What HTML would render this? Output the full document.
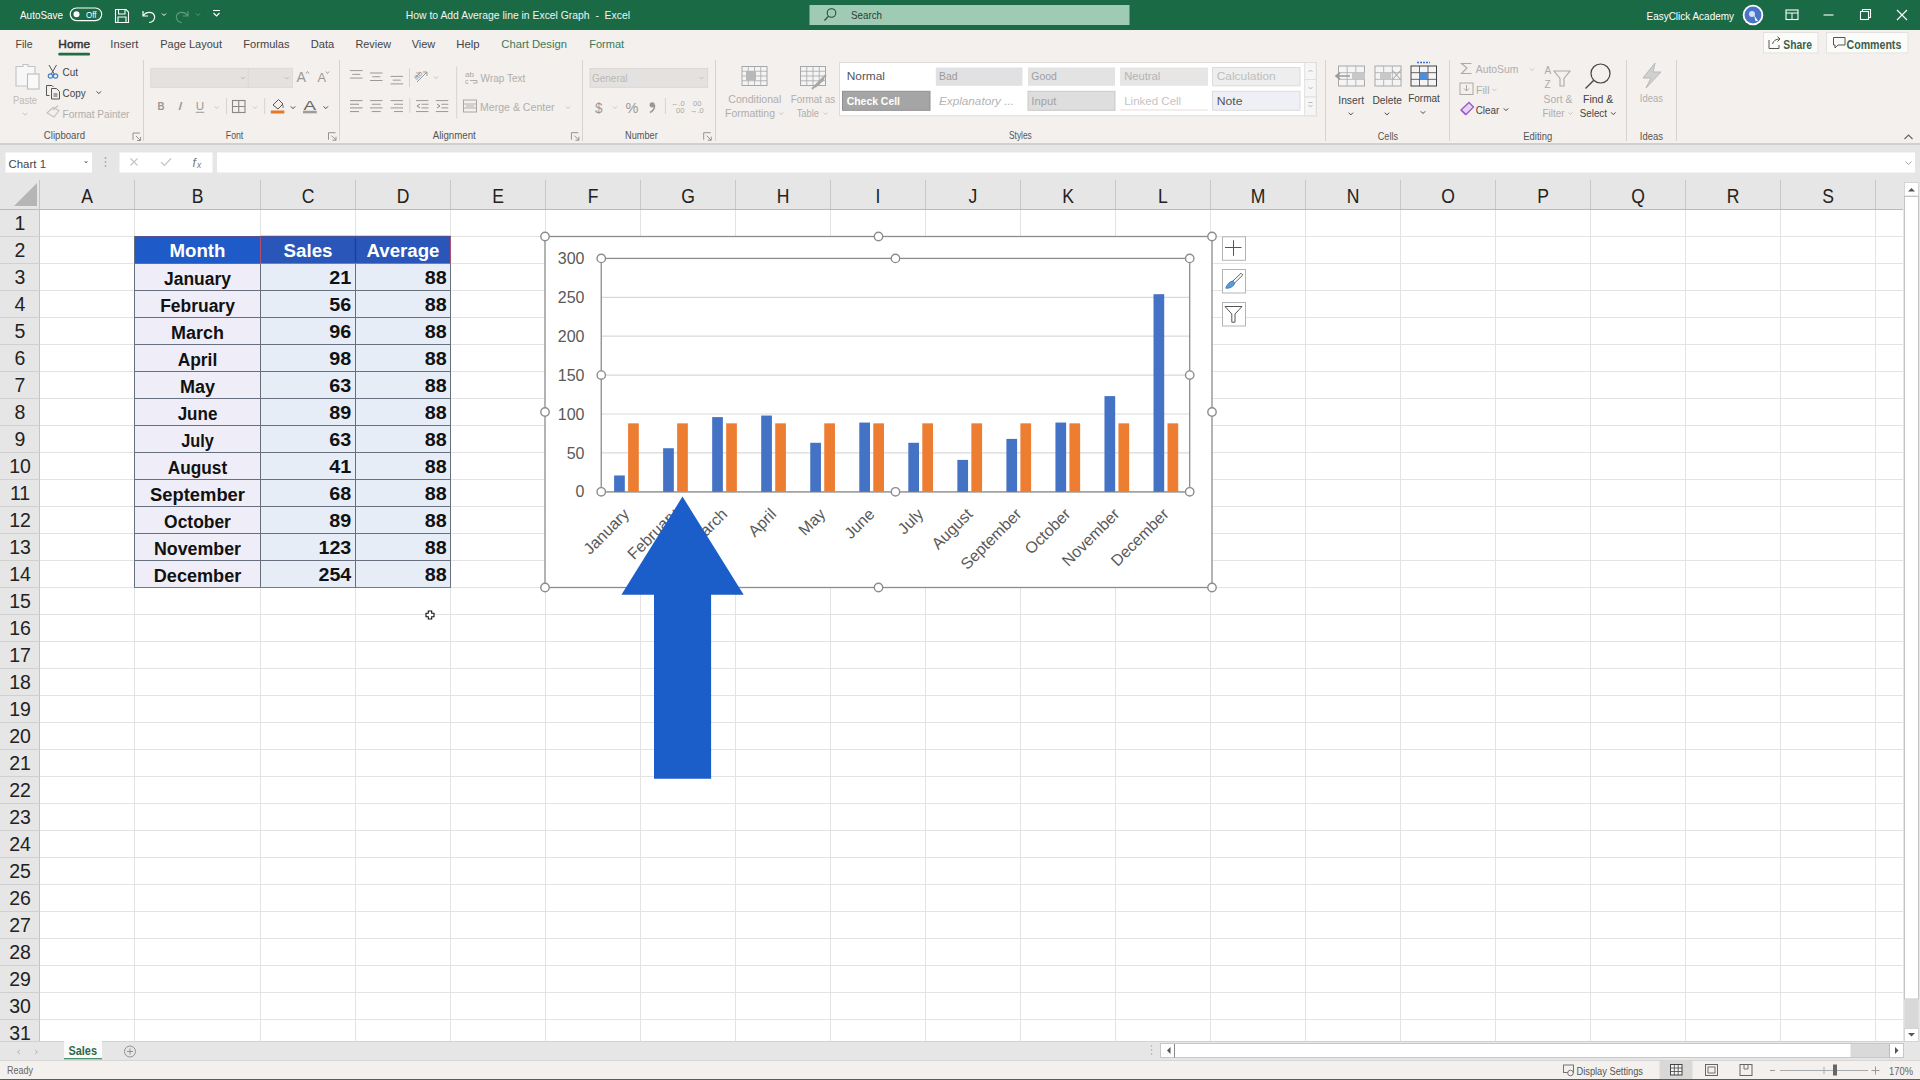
<!DOCTYPE html><html><head><meta charset="utf-8"><style>html,body{margin:0;padding:0;width:1920px;height:1080px;overflow:hidden;background:#fff}svg{display:block}text{font-family:"Liberation Sans",sans-serif}</style></head><body><svg width="1920" height="1080" viewBox="0 0 1920 1080"><rect x="0" y="0" width="1920" height="30" fill="#1b6a46" />
<rect x="0" y="30" width="1920" height="113" fill="#f4f0ed" />
<rect x="0" y="143" width="1920" height="2" fill="#d2d0ce" />
<rect x="0" y="145" width="1920" height="31" fill="#e6e6e6" />
<rect x="0" y="176" width="1903" height="33.5" fill="#e6e6e6" />
<rect x="39.5" y="209.5" width="1863.5" height="831.5" fill="#ffffff" />
<rect x="0" y="209.5" width="39.5" height="831.5" fill="#e6e6e6" />
<rect x="0" y="1041" width="1920" height="20" fill="#e6e6e6" />
<rect x="0" y="1061" width="1920" height="18" fill="#f4f0ed" />
<rect x="0" y="1079" width="1920" height="1" fill="#5b5b5b" />
<rect x="1903" y="176" width="17" height="865" fill="#e6e6e6" />
<line x1="39.5" y1="236.5" x2="1903" y2="236.5" stroke="#e3e3e3" stroke-width="1" />
<line x1="39.5" y1="263.5" x2="1903" y2="263.5" stroke="#e3e3e3" stroke-width="1" />
<line x1="39.5" y1="290.5" x2="1903" y2="290.5" stroke="#e3e3e3" stroke-width="1" />
<line x1="39.5" y1="317.5" x2="1903" y2="317.5" stroke="#e3e3e3" stroke-width="1" />
<line x1="39.5" y1="344.5" x2="1903" y2="344.5" stroke="#e3e3e3" stroke-width="1" />
<line x1="39.5" y1="371.5" x2="1903" y2="371.5" stroke="#e3e3e3" stroke-width="1" />
<line x1="39.5" y1="398.5" x2="1903" y2="398.5" stroke="#e3e3e3" stroke-width="1" />
<line x1="39.5" y1="425.5" x2="1903" y2="425.5" stroke="#e3e3e3" stroke-width="1" />
<line x1="39.5" y1="452.5" x2="1903" y2="452.5" stroke="#e3e3e3" stroke-width="1" />
<line x1="39.5" y1="479.5" x2="1903" y2="479.5" stroke="#e3e3e3" stroke-width="1" />
<line x1="39.5" y1="506.5" x2="1903" y2="506.5" stroke="#e3e3e3" stroke-width="1" />
<line x1="39.5" y1="533.5" x2="1903" y2="533.5" stroke="#e3e3e3" stroke-width="1" />
<line x1="39.5" y1="560.5" x2="1903" y2="560.5" stroke="#e3e3e3" stroke-width="1" />
<line x1="39.5" y1="587.5" x2="1903" y2="587.5" stroke="#e3e3e3" stroke-width="1" />
<line x1="39.5" y1="614.5" x2="1903" y2="614.5" stroke="#e3e3e3" stroke-width="1" />
<line x1="39.5" y1="641.5" x2="1903" y2="641.5" stroke="#e3e3e3" stroke-width="1" />
<line x1="39.5" y1="668.5" x2="1903" y2="668.5" stroke="#e3e3e3" stroke-width="1" />
<line x1="39.5" y1="695.5" x2="1903" y2="695.5" stroke="#e3e3e3" stroke-width="1" />
<line x1="39.5" y1="722.5" x2="1903" y2="722.5" stroke="#e3e3e3" stroke-width="1" />
<line x1="39.5" y1="749.5" x2="1903" y2="749.5" stroke="#e3e3e3" stroke-width="1" />
<line x1="39.5" y1="776.5" x2="1903" y2="776.5" stroke="#e3e3e3" stroke-width="1" />
<line x1="39.5" y1="803.5" x2="1903" y2="803.5" stroke="#e3e3e3" stroke-width="1" />
<line x1="39.5" y1="830.5" x2="1903" y2="830.5" stroke="#e3e3e3" stroke-width="1" />
<line x1="39.5" y1="857.5" x2="1903" y2="857.5" stroke="#e3e3e3" stroke-width="1" />
<line x1="39.5" y1="884.5" x2="1903" y2="884.5" stroke="#e3e3e3" stroke-width="1" />
<line x1="39.5" y1="911.5" x2="1903" y2="911.5" stroke="#e3e3e3" stroke-width="1" />
<line x1="39.5" y1="938.5" x2="1903" y2="938.5" stroke="#e3e3e3" stroke-width="1" />
<line x1="39.5" y1="965.5" x2="1903" y2="965.5" stroke="#e3e3e3" stroke-width="1" />
<line x1="39.5" y1="992.5" x2="1903" y2="992.5" stroke="#e3e3e3" stroke-width="1" />
<line x1="39.5" y1="1019.5" x2="1903" y2="1019.5" stroke="#e3e3e3" stroke-width="1" />
<line x1="134.5" y1="209.5" x2="134.5" y2="1041" stroke="#e3e3e3" stroke-width="1" />
<line x1="260.5" y1="209.5" x2="260.5" y2="1041" stroke="#e3e3e3" stroke-width="1" />
<line x1="355.5" y1="209.5" x2="355.5" y2="1041" stroke="#e3e3e3" stroke-width="1" />
<line x1="450.5" y1="209.5" x2="450.5" y2="1041" stroke="#e3e3e3" stroke-width="1" />
<line x1="545.5" y1="209.5" x2="545.5" y2="1041" stroke="#e3e3e3" stroke-width="1" />
<line x1="640.5" y1="209.5" x2="640.5" y2="1041" stroke="#e3e3e3" stroke-width="1" />
<line x1="735.5" y1="209.5" x2="735.5" y2="1041" stroke="#e3e3e3" stroke-width="1" />
<line x1="830.5" y1="209.5" x2="830.5" y2="1041" stroke="#e3e3e3" stroke-width="1" />
<line x1="925.5" y1="209.5" x2="925.5" y2="1041" stroke="#e3e3e3" stroke-width="1" />
<line x1="1020.5" y1="209.5" x2="1020.5" y2="1041" stroke="#e3e3e3" stroke-width="1" />
<line x1="1115.5" y1="209.5" x2="1115.5" y2="1041" stroke="#e3e3e3" stroke-width="1" />
<line x1="1210.5" y1="209.5" x2="1210.5" y2="1041" stroke="#e3e3e3" stroke-width="1" />
<line x1="1305.5" y1="209.5" x2="1305.5" y2="1041" stroke="#e3e3e3" stroke-width="1" />
<line x1="1400.5" y1="209.5" x2="1400.5" y2="1041" stroke="#e3e3e3" stroke-width="1" />
<line x1="1495.5" y1="209.5" x2="1495.5" y2="1041" stroke="#e3e3e3" stroke-width="1" />
<line x1="1590.5" y1="209.5" x2="1590.5" y2="1041" stroke="#e3e3e3" stroke-width="1" />
<line x1="1685.5" y1="209.5" x2="1685.5" y2="1041" stroke="#e3e3e3" stroke-width="1" />
<line x1="1780.5" y1="209.5" x2="1780.5" y2="1041" stroke="#e3e3e3" stroke-width="1" />
<line x1="1875.5" y1="209.5" x2="1875.5" y2="1041" stroke="#e3e3e3" stroke-width="1" />
<line x1="134.5" y1="180" x2="134.5" y2="209.5" stroke="#c8c8c8" stroke-width="1" />
<line x1="260.5" y1="180" x2="260.5" y2="209.5" stroke="#c8c8c8" stroke-width="1" />
<line x1="355.5" y1="180" x2="355.5" y2="209.5" stroke="#c8c8c8" stroke-width="1" />
<line x1="450.5" y1="180" x2="450.5" y2="209.5" stroke="#c8c8c8" stroke-width="1" />
<line x1="545.5" y1="180" x2="545.5" y2="209.5" stroke="#c8c8c8" stroke-width="1" />
<line x1="640.5" y1="180" x2="640.5" y2="209.5" stroke="#c8c8c8" stroke-width="1" />
<line x1="735.5" y1="180" x2="735.5" y2="209.5" stroke="#c8c8c8" stroke-width="1" />
<line x1="830.5" y1="180" x2="830.5" y2="209.5" stroke="#c8c8c8" stroke-width="1" />
<line x1="925.5" y1="180" x2="925.5" y2="209.5" stroke="#c8c8c8" stroke-width="1" />
<line x1="1020.5" y1="180" x2="1020.5" y2="209.5" stroke="#c8c8c8" stroke-width="1" />
<line x1="1115.5" y1="180" x2="1115.5" y2="209.5" stroke="#c8c8c8" stroke-width="1" />
<line x1="1210.5" y1="180" x2="1210.5" y2="209.5" stroke="#c8c8c8" stroke-width="1" />
<line x1="1305.5" y1="180" x2="1305.5" y2="209.5" stroke="#c8c8c8" stroke-width="1" />
<line x1="1400.5" y1="180" x2="1400.5" y2="209.5" stroke="#c8c8c8" stroke-width="1" />
<line x1="1495.5" y1="180" x2="1495.5" y2="209.5" stroke="#c8c8c8" stroke-width="1" />
<line x1="1590.5" y1="180" x2="1590.5" y2="209.5" stroke="#c8c8c8" stroke-width="1" />
<line x1="1685.5" y1="180" x2="1685.5" y2="209.5" stroke="#c8c8c8" stroke-width="1" />
<line x1="1780.5" y1="180" x2="1780.5" y2="209.5" stroke="#c8c8c8" stroke-width="1" />
<line x1="1875.5" y1="180" x2="1875.5" y2="209.5" stroke="#c8c8c8" stroke-width="1" />
<line x1="0" y1="209.5" x2="1903" y2="209.5" stroke="#b9b9b9" stroke-width="1" />
<line x1="39.5" y1="180" x2="39.5" y2="1041" stroke="#c4c4c4" stroke-width="1" />
<line x1="0" y1="236.5" x2="39.5" y2="236.5" stroke="#d0d0d0" stroke-width="1" />
<line x1="0" y1="263.5" x2="39.5" y2="263.5" stroke="#d0d0d0" stroke-width="1" />
<line x1="0" y1="290.5" x2="39.5" y2="290.5" stroke="#d0d0d0" stroke-width="1" />
<line x1="0" y1="317.5" x2="39.5" y2="317.5" stroke="#d0d0d0" stroke-width="1" />
<line x1="0" y1="344.5" x2="39.5" y2="344.5" stroke="#d0d0d0" stroke-width="1" />
<line x1="0" y1="371.5" x2="39.5" y2="371.5" stroke="#d0d0d0" stroke-width="1" />
<line x1="0" y1="398.5" x2="39.5" y2="398.5" stroke="#d0d0d0" stroke-width="1" />
<line x1="0" y1="425.5" x2="39.5" y2="425.5" stroke="#d0d0d0" stroke-width="1" />
<line x1="0" y1="452.5" x2="39.5" y2="452.5" stroke="#d0d0d0" stroke-width="1" />
<line x1="0" y1="479.5" x2="39.5" y2="479.5" stroke="#d0d0d0" stroke-width="1" />
<line x1="0" y1="506.5" x2="39.5" y2="506.5" stroke="#d0d0d0" stroke-width="1" />
<line x1="0" y1="533.5" x2="39.5" y2="533.5" stroke="#d0d0d0" stroke-width="1" />
<line x1="0" y1="560.5" x2="39.5" y2="560.5" stroke="#d0d0d0" stroke-width="1" />
<line x1="0" y1="587.5" x2="39.5" y2="587.5" stroke="#d0d0d0" stroke-width="1" />
<line x1="0" y1="614.5" x2="39.5" y2="614.5" stroke="#d0d0d0" stroke-width="1" />
<line x1="0" y1="641.5" x2="39.5" y2="641.5" stroke="#d0d0d0" stroke-width="1" />
<line x1="0" y1="668.5" x2="39.5" y2="668.5" stroke="#d0d0d0" stroke-width="1" />
<line x1="0" y1="695.5" x2="39.5" y2="695.5" stroke="#d0d0d0" stroke-width="1" />
<line x1="0" y1="722.5" x2="39.5" y2="722.5" stroke="#d0d0d0" stroke-width="1" />
<line x1="0" y1="749.5" x2="39.5" y2="749.5" stroke="#d0d0d0" stroke-width="1" />
<line x1="0" y1="776.5" x2="39.5" y2="776.5" stroke="#d0d0d0" stroke-width="1" />
<line x1="0" y1="803.5" x2="39.5" y2="803.5" stroke="#d0d0d0" stroke-width="1" />
<line x1="0" y1="830.5" x2="39.5" y2="830.5" stroke="#d0d0d0" stroke-width="1" />
<line x1="0" y1="857.5" x2="39.5" y2="857.5" stroke="#d0d0d0" stroke-width="1" />
<line x1="0" y1="884.5" x2="39.5" y2="884.5" stroke="#d0d0d0" stroke-width="1" />
<line x1="0" y1="911.5" x2="39.5" y2="911.5" stroke="#d0d0d0" stroke-width="1" />
<line x1="0" y1="938.5" x2="39.5" y2="938.5" stroke="#d0d0d0" stroke-width="1" />
<line x1="0" y1="965.5" x2="39.5" y2="965.5" stroke="#d0d0d0" stroke-width="1" />
<line x1="0" y1="992.5" x2="39.5" y2="992.5" stroke="#d0d0d0" stroke-width="1" />
<line x1="0" y1="1019.5" x2="39.5" y2="1019.5" stroke="#d0d0d0" stroke-width="1" />
<text x="87.0" y="202.5" font-size="19.5" fill="#222" text-anchor="middle" font-weight="normal" font-style="normal" textLength="11.71" lengthAdjust="spacingAndGlyphs" >A</text>
<text x="197.5" y="202.5" font-size="19.5" fill="#222" text-anchor="middle" font-weight="normal" font-style="normal" textLength="11.71" lengthAdjust="spacingAndGlyphs" >B</text>
<text x="308.0" y="202.5" font-size="19.5" fill="#222" text-anchor="middle" font-weight="normal" font-style="normal" textLength="12.67" lengthAdjust="spacingAndGlyphs" >C</text>
<text x="403.0" y="202.5" font-size="19.5" fill="#222" text-anchor="middle" font-weight="normal" font-style="normal" textLength="12.67" lengthAdjust="spacingAndGlyphs" >D</text>
<text x="498.0" y="202.5" font-size="19.5" fill="#222" text-anchor="middle" font-weight="normal" font-style="normal" textLength="11.71" lengthAdjust="spacingAndGlyphs" >E</text>
<text x="593.0" y="202.5" font-size="19.5" fill="#222" text-anchor="middle" font-weight="normal" font-style="normal" textLength="10.72" lengthAdjust="spacingAndGlyphs" >F</text>
<text x="688.0" y="202.5" font-size="19.5" fill="#222" text-anchor="middle" font-weight="normal" font-style="normal" textLength="13.65" lengthAdjust="spacingAndGlyphs" >G</text>
<text x="783.0" y="202.5" font-size="19.5" fill="#222" text-anchor="middle" font-weight="normal" font-style="normal" textLength="12.67" lengthAdjust="spacingAndGlyphs" >H</text>
<text x="878.0" y="202.5" font-size="19.5" fill="#222" text-anchor="middle" font-weight="normal" font-style="normal" textLength="4.88" lengthAdjust="spacingAndGlyphs" >I</text>
<text x="973.0" y="202.5" font-size="19.5" fill="#222" text-anchor="middle" font-weight="normal" font-style="normal" textLength="8.78" lengthAdjust="spacingAndGlyphs" >J</text>
<text x="1068.0" y="202.5" font-size="19.5" fill="#222" text-anchor="middle" font-weight="normal" font-style="normal" textLength="11.71" lengthAdjust="spacingAndGlyphs" >K</text>
<text x="1163.0" y="202.5" font-size="19.5" fill="#222" text-anchor="middle" font-weight="normal" font-style="normal" textLength="9.76" lengthAdjust="spacingAndGlyphs" >L</text>
<text x="1258.0" y="202.5" font-size="19.5" fill="#222" text-anchor="middle" font-weight="normal" font-style="normal" textLength="14.62" lengthAdjust="spacingAndGlyphs" >M</text>
<text x="1353.0" y="202.5" font-size="19.5" fill="#222" text-anchor="middle" font-weight="normal" font-style="normal" textLength="12.67" lengthAdjust="spacingAndGlyphs" >N</text>
<text x="1448.0" y="202.5" font-size="19.5" fill="#222" text-anchor="middle" font-weight="normal" font-style="normal" textLength="13.65" lengthAdjust="spacingAndGlyphs" >O</text>
<text x="1543.0" y="202.5" font-size="19.5" fill="#222" text-anchor="middle" font-weight="normal" font-style="normal" textLength="11.71" lengthAdjust="spacingAndGlyphs" >P</text>
<text x="1638.0" y="202.5" font-size="19.5" fill="#222" text-anchor="middle" font-weight="normal" font-style="normal" textLength="13.65" lengthAdjust="spacingAndGlyphs" >Q</text>
<text x="1733.0" y="202.5" font-size="19.5" fill="#222" text-anchor="middle" font-weight="normal" font-style="normal" textLength="12.67" lengthAdjust="spacingAndGlyphs" >R</text>
<text x="1828.0" y="202.5" font-size="19.5" fill="#222" text-anchor="middle" font-weight="normal" font-style="normal" textLength="11.71" lengthAdjust="spacingAndGlyphs" >S</text>
<text x="20" y="229.8" font-size="19.5" fill="#222" text-anchor="middle" font-weight="normal" font-style="normal" >1</text>
<text x="20" y="256.8" font-size="19.5" fill="#222" text-anchor="middle" font-weight="normal" font-style="normal" >2</text>
<text x="20" y="283.8" font-size="19.5" fill="#222" text-anchor="middle" font-weight="normal" font-style="normal" >3</text>
<text x="20" y="310.8" font-size="19.5" fill="#222" text-anchor="middle" font-weight="normal" font-style="normal" >4</text>
<text x="20" y="337.8" font-size="19.5" fill="#222" text-anchor="middle" font-weight="normal" font-style="normal" >5</text>
<text x="20" y="364.8" font-size="19.5" fill="#222" text-anchor="middle" font-weight="normal" font-style="normal" >6</text>
<text x="20" y="391.8" font-size="19.5" fill="#222" text-anchor="middle" font-weight="normal" font-style="normal" >7</text>
<text x="20" y="418.8" font-size="19.5" fill="#222" text-anchor="middle" font-weight="normal" font-style="normal" >8</text>
<text x="20" y="445.8" font-size="19.5" fill="#222" text-anchor="middle" font-weight="normal" font-style="normal" >9</text>
<text x="20" y="472.8" font-size="19.5" fill="#222" text-anchor="middle" font-weight="normal" font-style="normal" >10</text>
<text x="20" y="499.8" font-size="19.5" fill="#222" text-anchor="middle" font-weight="normal" font-style="normal" >11</text>
<text x="20" y="526.8" font-size="19.5" fill="#222" text-anchor="middle" font-weight="normal" font-style="normal" >12</text>
<text x="20" y="553.8" font-size="19.5" fill="#222" text-anchor="middle" font-weight="normal" font-style="normal" >13</text>
<text x="20" y="580.8" font-size="19.5" fill="#222" text-anchor="middle" font-weight="normal" font-style="normal" >14</text>
<text x="20" y="607.8" font-size="19.5" fill="#222" text-anchor="middle" font-weight="normal" font-style="normal" >15</text>
<text x="20" y="634.8" font-size="19.5" fill="#222" text-anchor="middle" font-weight="normal" font-style="normal" >16</text>
<text x="20" y="661.8" font-size="19.5" fill="#222" text-anchor="middle" font-weight="normal" font-style="normal" >17</text>
<text x="20" y="688.8" font-size="19.5" fill="#222" text-anchor="middle" font-weight="normal" font-style="normal" >18</text>
<text x="20" y="715.8" font-size="19.5" fill="#222" text-anchor="middle" font-weight="normal" font-style="normal" >19</text>
<text x="20" y="742.8" font-size="19.5" fill="#222" text-anchor="middle" font-weight="normal" font-style="normal" >20</text>
<text x="20" y="769.8" font-size="19.5" fill="#222" text-anchor="middle" font-weight="normal" font-style="normal" >21</text>
<text x="20" y="796.8" font-size="19.5" fill="#222" text-anchor="middle" font-weight="normal" font-style="normal" >22</text>
<text x="20" y="823.8" font-size="19.5" fill="#222" text-anchor="middle" font-weight="normal" font-style="normal" >23</text>
<text x="20" y="850.8" font-size="19.5" fill="#222" text-anchor="middle" font-weight="normal" font-style="normal" >24</text>
<text x="20" y="877.8" font-size="19.5" fill="#222" text-anchor="middle" font-weight="normal" font-style="normal" >25</text>
<text x="20" y="904.8" font-size="19.5" fill="#222" text-anchor="middle" font-weight="normal" font-style="normal" >26</text>
<text x="20" y="931.8" font-size="19.5" fill="#222" text-anchor="middle" font-weight="normal" font-style="normal" >27</text>
<text x="20" y="958.8" font-size="19.5" fill="#222" text-anchor="middle" font-weight="normal" font-style="normal" >28</text>
<text x="20" y="985.8" font-size="19.5" fill="#222" text-anchor="middle" font-weight="normal" font-style="normal" >29</text>
<text x="20" y="1012.8" font-size="19.5" fill="#222" text-anchor="middle" font-weight="normal" font-style="normal" >30</text>
<text x="20" y="1039.8" font-size="19.5" fill="#222" text-anchor="middle" font-weight="normal" font-style="normal" >31</text>
<polygon points="14,206 37,206 37,183" fill="#b5b5b5"/>
<rect x="134.5" y="236.5" width="126.0" height="27" fill="#1e5bc8" />
<rect x="260.5" y="236.5" width="190.0" height="27" fill="#2a55b9" />
<rect x="134.5" y="263.5" width="126.0" height="27" fill="#efedf7" />
<rect x="260.5" y="263.5" width="190.0" height="27" fill="#e7edf7" />
<rect x="134.5" y="290.5" width="126.0" height="27" fill="#efedf7" />
<rect x="260.5" y="290.5" width="190.0" height="27" fill="#e7edf7" />
<rect x="134.5" y="317.5" width="126.0" height="27" fill="#efedf7" />
<rect x="260.5" y="317.5" width="190.0" height="27" fill="#e7edf7" />
<rect x="134.5" y="344.5" width="126.0" height="27" fill="#efedf7" />
<rect x="260.5" y="344.5" width="190.0" height="27" fill="#e7edf7" />
<rect x="134.5" y="371.5" width="126.0" height="27" fill="#efedf7" />
<rect x="260.5" y="371.5" width="190.0" height="27" fill="#e7edf7" />
<rect x="134.5" y="398.5" width="126.0" height="27" fill="#efedf7" />
<rect x="260.5" y="398.5" width="190.0" height="27" fill="#e7edf7" />
<rect x="134.5" y="425.5" width="126.0" height="27" fill="#efedf7" />
<rect x="260.5" y="425.5" width="190.0" height="27" fill="#e7edf7" />
<rect x="134.5" y="452.5" width="126.0" height="27" fill="#efedf7" />
<rect x="260.5" y="452.5" width="190.0" height="27" fill="#e7edf7" />
<rect x="134.5" y="479.5" width="126.0" height="27" fill="#efedf7" />
<rect x="260.5" y="479.5" width="190.0" height="27" fill="#e7edf7" />
<rect x="134.5" y="506.5" width="126.0" height="27" fill="#efedf7" />
<rect x="260.5" y="506.5" width="190.0" height="27" fill="#e7edf7" />
<rect x="134.5" y="533.5" width="126.0" height="27" fill="#efedf7" />
<rect x="260.5" y="533.5" width="190.0" height="27" fill="#e7edf7" />
<rect x="134.5" y="560.5" width="126.0" height="27" fill="#efedf7" />
<rect x="260.5" y="560.5" width="190.0" height="27" fill="#e7edf7" />
<line x1="134.5" y1="236.5" x2="450.5" y2="236.5" stroke="#66707f" stroke-width="1" />
<line x1="134.5" y1="263.5" x2="450.5" y2="263.5" stroke="#66707f" stroke-width="1" />
<line x1="134.5" y1="290.5" x2="450.5" y2="290.5" stroke="#66707f" stroke-width="1" />
<line x1="134.5" y1="317.5" x2="450.5" y2="317.5" stroke="#66707f" stroke-width="1" />
<line x1="134.5" y1="344.5" x2="450.5" y2="344.5" stroke="#66707f" stroke-width="1" />
<line x1="134.5" y1="371.5" x2="450.5" y2="371.5" stroke="#66707f" stroke-width="1" />
<line x1="134.5" y1="398.5" x2="450.5" y2="398.5" stroke="#66707f" stroke-width="1" />
<line x1="134.5" y1="425.5" x2="450.5" y2="425.5" stroke="#66707f" stroke-width="1" />
<line x1="134.5" y1="452.5" x2="450.5" y2="452.5" stroke="#66707f" stroke-width="1" />
<line x1="134.5" y1="479.5" x2="450.5" y2="479.5" stroke="#66707f" stroke-width="1" />
<line x1="134.5" y1="506.5" x2="450.5" y2="506.5" stroke="#66707f" stroke-width="1" />
<line x1="134.5" y1="533.5" x2="450.5" y2="533.5" stroke="#66707f" stroke-width="1" />
<line x1="134.5" y1="560.5" x2="450.5" y2="560.5" stroke="#66707f" stroke-width="1" />
<line x1="134.5" y1="587.5" x2="450.5" y2="587.5" stroke="#66707f" stroke-width="1" />
<line x1="134.5" y1="236.5" x2="450.5" y2="236.5" stroke="#5a4f8f" stroke-width="1" />
<line x1="134.5" y1="587.5" x2="450.5" y2="587.5" stroke="#6a7aa0" stroke-width="1" />
<line x1="134.5" y1="236.5" x2="134.5" y2="587.5" stroke="#66707f" stroke-width="1" />
<line x1="260.5" y1="236.5" x2="260.5" y2="587.5" stroke="#66707f" stroke-width="1" />
<line x1="355.5" y1="236.5" x2="355.5" y2="587.5" stroke="#66707f" stroke-width="1" />
<line x1="450.5" y1="236.5" x2="450.5" y2="587.5" stroke="#66707f" stroke-width="1" />
<rect x="260.5" y="236.5" width="190.0" height="27" fill="none" stroke="#b0506a" stroke-width="1"/>
<line x1="260.5" y1="263.5" x2="450.5" y2="263.5" stroke="#c46078" stroke-width="1.2" />
<line x1="355.5" y1="237.5" x2="355.5" y2="262.5" stroke="#1d3f8f" stroke-width="1.2" />
<line x1="260.5" y1="236.5" x2="450.5" y2="236.5" stroke="#4a4f9a" stroke-width="1.6" />
<text x="197.5" y="257.2" font-size="18.7" fill="#fff" text-anchor="middle" font-weight="bold" font-style="normal" textLength="56" lengthAdjust="spacingAndGlyphs" >Month</text>
<text x="308.0" y="257.2" font-size="18.7" fill="#fff" text-anchor="middle" font-weight="bold" font-style="normal" textLength="49" lengthAdjust="spacingAndGlyphs" >Sales</text>
<text x="403.0" y="257.2" font-size="18.7" fill="#fff" text-anchor="middle" font-weight="bold" font-style="normal" textLength="73" lengthAdjust="spacingAndGlyphs" >Average</text>
<text x="197.5" y="284.8" font-size="18" fill="#111" text-anchor="middle" font-weight="bold" font-style="normal" textLength="66.9" lengthAdjust="spacingAndGlyphs" >January</text>
<text x="351.3" y="283.6" font-size="17.5" fill="#111" text-anchor="end" font-weight="bold" font-style="normal" textLength="22" lengthAdjust="spacingAndGlyphs" >21</text>
<text x="446.7" y="283.6" font-size="17.5" fill="#111" text-anchor="end" font-weight="bold" font-style="normal" textLength="22" lengthAdjust="spacingAndGlyphs" >88</text>
<text x="197.5" y="311.8" font-size="18" fill="#111" text-anchor="middle" font-weight="bold" font-style="normal" textLength="74.7" lengthAdjust="spacingAndGlyphs" >February</text>
<text x="351.3" y="310.6" font-size="17.5" fill="#111" text-anchor="end" font-weight="bold" font-style="normal" textLength="22" lengthAdjust="spacingAndGlyphs" >56</text>
<text x="446.7" y="310.6" font-size="17.5" fill="#111" text-anchor="end" font-weight="bold" font-style="normal" textLength="22" lengthAdjust="spacingAndGlyphs" >88</text>
<text x="197.5" y="338.8" font-size="18" fill="#111" text-anchor="middle" font-weight="bold" font-style="normal" textLength="52.8" lengthAdjust="spacingAndGlyphs" >March</text>
<text x="351.3" y="337.6" font-size="17.5" fill="#111" text-anchor="end" font-weight="bold" font-style="normal" textLength="22" lengthAdjust="spacingAndGlyphs" >96</text>
<text x="446.7" y="337.6" font-size="17.5" fill="#111" text-anchor="end" font-weight="bold" font-style="normal" textLength="22" lengthAdjust="spacingAndGlyphs" >88</text>
<text x="197.5" y="365.8" font-size="18" fill="#111" text-anchor="middle" font-weight="bold" font-style="normal" textLength="39.5" lengthAdjust="spacingAndGlyphs" >April</text>
<text x="351.3" y="364.6" font-size="17.5" fill="#111" text-anchor="end" font-weight="bold" font-style="normal" textLength="22" lengthAdjust="spacingAndGlyphs" >98</text>
<text x="446.7" y="364.6" font-size="17.5" fill="#111" text-anchor="end" font-weight="bold" font-style="normal" textLength="22" lengthAdjust="spacingAndGlyphs" >88</text>
<text x="197.5" y="392.8" font-size="18" fill="#111" text-anchor="middle" font-weight="bold" font-style="normal" textLength="35" lengthAdjust="spacingAndGlyphs" >May</text>
<text x="351.3" y="391.6" font-size="17.5" fill="#111" text-anchor="end" font-weight="bold" font-style="normal" textLength="22" lengthAdjust="spacingAndGlyphs" >63</text>
<text x="446.7" y="391.6" font-size="17.5" fill="#111" text-anchor="end" font-weight="bold" font-style="normal" textLength="22" lengthAdjust="spacingAndGlyphs" >88</text>
<text x="197.5" y="419.8" font-size="18" fill="#111" text-anchor="middle" font-weight="bold" font-style="normal" textLength="39.7" lengthAdjust="spacingAndGlyphs" >June</text>
<text x="351.3" y="418.6" font-size="17.5" fill="#111" text-anchor="end" font-weight="bold" font-style="normal" textLength="22" lengthAdjust="spacingAndGlyphs" >89</text>
<text x="446.7" y="418.6" font-size="17.5" fill="#111" text-anchor="end" font-weight="bold" font-style="normal" textLength="22" lengthAdjust="spacingAndGlyphs" >88</text>
<text x="197.5" y="446.8" font-size="18" fill="#111" text-anchor="middle" font-weight="bold" font-style="normal" textLength="32.6" lengthAdjust="spacingAndGlyphs" >July</text>
<text x="351.3" y="445.6" font-size="17.5" fill="#111" text-anchor="end" font-weight="bold" font-style="normal" textLength="22" lengthAdjust="spacingAndGlyphs" >63</text>
<text x="446.7" y="445.6" font-size="17.5" fill="#111" text-anchor="end" font-weight="bold" font-style="normal" textLength="22" lengthAdjust="spacingAndGlyphs" >88</text>
<text x="197.5" y="473.8" font-size="18" fill="#111" text-anchor="middle" font-weight="bold" font-style="normal" textLength="59.4" lengthAdjust="spacingAndGlyphs" >August</text>
<text x="351.3" y="472.6" font-size="17.5" fill="#111" text-anchor="end" font-weight="bold" font-style="normal" textLength="22" lengthAdjust="spacingAndGlyphs" >41</text>
<text x="446.7" y="472.6" font-size="17.5" fill="#111" text-anchor="end" font-weight="bold" font-style="normal" textLength="22" lengthAdjust="spacingAndGlyphs" >88</text>
<text x="197.5" y="500.8" font-size="18" fill="#111" text-anchor="middle" font-weight="bold" font-style="normal" textLength="95" lengthAdjust="spacingAndGlyphs" >September</text>
<text x="351.3" y="499.6" font-size="17.5" fill="#111" text-anchor="end" font-weight="bold" font-style="normal" textLength="22" lengthAdjust="spacingAndGlyphs" >68</text>
<text x="446.7" y="499.6" font-size="17.5" fill="#111" text-anchor="end" font-weight="bold" font-style="normal" textLength="22" lengthAdjust="spacingAndGlyphs" >88</text>
<text x="197.5" y="527.8" font-size="18" fill="#111" text-anchor="middle" font-weight="bold" font-style="normal" textLength="66.8" lengthAdjust="spacingAndGlyphs" >October</text>
<text x="351.3" y="526.5999999999999" font-size="17.5" fill="#111" text-anchor="end" font-weight="bold" font-style="normal" textLength="22" lengthAdjust="spacingAndGlyphs" >89</text>
<text x="446.7" y="526.5999999999999" font-size="17.5" fill="#111" text-anchor="end" font-weight="bold" font-style="normal" textLength="22" lengthAdjust="spacingAndGlyphs" >88</text>
<text x="197.5" y="554.8" font-size="18" fill="#111" text-anchor="middle" font-weight="bold" font-style="normal" textLength="87.1" lengthAdjust="spacingAndGlyphs" >November</text>
<text x="351.3" y="553.5999999999999" font-size="17.5" fill="#111" text-anchor="end" font-weight="bold" font-style="normal" textLength="32.8" lengthAdjust="spacingAndGlyphs" >123</text>
<text x="446.7" y="553.5999999999999" font-size="17.5" fill="#111" text-anchor="end" font-weight="bold" font-style="normal" textLength="22" lengthAdjust="spacingAndGlyphs" >88</text>
<text x="197.5" y="581.8" font-size="18" fill="#111" text-anchor="middle" font-weight="bold" font-style="normal" textLength="87.5" lengthAdjust="spacingAndGlyphs" >December</text>
<text x="351.3" y="580.5999999999999" font-size="17.5" fill="#111" text-anchor="end" font-weight="bold" font-style="normal" textLength="32.8" lengthAdjust="spacingAndGlyphs" >254</text>
<text x="446.7" y="580.5999999999999" font-size="17.5" fill="#111" text-anchor="end" font-weight="bold" font-style="normal" textLength="22" lengthAdjust="spacingAndGlyphs" >88</text>
<rect x="545" y="236.5" width="667" height="351.0" fill="#ffffff" stroke="#8c8c8c" stroke-width="1.3" />
<line x1="601.25" y1="452.9" x2="1189.7" y2="452.9" stroke="#d9d9d9" stroke-width="1.2" />
<line x1="601.25" y1="414.0" x2="1189.7" y2="414.0" stroke="#d9d9d9" stroke-width="1.2" />
<line x1="601.25" y1="375.1" x2="1189.7" y2="375.1" stroke="#d9d9d9" stroke-width="1.2" />
<line x1="601.25" y1="336.2" x2="1189.7" y2="336.2" stroke="#d9d9d9" stroke-width="1.2" />
<line x1="601.25" y1="297.29999999999995" x2="1189.7" y2="297.29999999999995" stroke="#d9d9d9" stroke-width="1.2" />
<rect x="601.25" y="258.4" width="588.45" height="233.40000000000003" fill="none" stroke="#8c8c8c" stroke-width="1.3"/>
<line x1="601.25" y1="491.8" x2="1189.7" y2="491.8" stroke="#a6a6a6" stroke-width="1.3" />
<text x="584.5" y="497.40000000000003" font-size="16" fill="#595959" text-anchor="end" font-weight="normal" font-style="normal" >0</text>
<text x="584.5" y="458.5" font-size="16" fill="#595959" text-anchor="end" font-weight="normal" font-style="normal" >50</text>
<text x="584.5" y="419.6" font-size="16" fill="#595959" text-anchor="end" font-weight="normal" font-style="normal" >100</text>
<text x="584.5" y="380.70000000000005" font-size="16" fill="#595959" text-anchor="end" font-weight="normal" font-style="normal" >150</text>
<text x="584.5" y="341.8" font-size="16" fill="#595959" text-anchor="end" font-weight="normal" font-style="normal" >200</text>
<text x="584.5" y="302.9" font-size="16" fill="#595959" text-anchor="end" font-weight="normal" font-style="normal" >250</text>
<text x="584.5" y="264.0" font-size="16" fill="#595959" text-anchor="end" font-weight="normal" font-style="normal" >300</text>
<rect x="614.1" y="475.462" width="10.7" height="16.338000000000005" fill="#4472c4" />
<rect x="628.1" y="423.336" width="10.7" height="68.46400000000001" fill="#ed7d31" />
<rect x="663.1375" y="448.232" width="10.7" height="43.568000000000005" fill="#4472c4" />
<rect x="677.1375" y="423.336" width="10.7" height="68.46400000000001" fill="#ed7d31" />
<rect x="712.1750000000001" y="417.11199999999997" width="10.7" height="74.68800000000002" fill="#4472c4" />
<rect x="726.1750000000001" y="423.336" width="10.7" height="68.46400000000001" fill="#ed7d31" />
<rect x="761.2125" y="415.556" width="10.7" height="76.24400000000001" fill="#4472c4" />
<rect x="775.2125" y="423.336" width="10.7" height="68.46400000000001" fill="#ed7d31" />
<rect x="810.25" y="442.786" width="10.7" height="49.01400000000001" fill="#4472c4" />
<rect x="824.25" y="423.336" width="10.7" height="68.46400000000001" fill="#ed7d31" />
<rect x="859.2875" y="422.558" width="10.7" height="69.24200000000002" fill="#4472c4" />
<rect x="873.2875" y="423.336" width="10.7" height="68.46400000000001" fill="#ed7d31" />
<rect x="908.325" y="442.786" width="10.7" height="49.01400000000001" fill="#4472c4" />
<rect x="922.325" y="423.336" width="10.7" height="68.46400000000001" fill="#ed7d31" />
<rect x="957.3625000000001" y="459.902" width="10.7" height="31.898000000000007" fill="#4472c4" />
<rect x="971.3625000000001" y="423.336" width="10.7" height="68.46400000000001" fill="#ed7d31" />
<rect x="1006.4" y="438.896" width="10.7" height="52.90400000000001" fill="#4472c4" />
<rect x="1020.4" y="423.336" width="10.7" height="68.46400000000001" fill="#ed7d31" />
<rect x="1055.4375" y="422.558" width="10.7" height="69.24200000000002" fill="#4472c4" />
<rect x="1069.4375" y="423.336" width="10.7" height="68.46400000000001" fill="#ed7d31" />
<rect x="1104.475" y="396.106" width="10.7" height="95.69400000000002" fill="#4472c4" />
<rect x="1118.475" y="423.336" width="10.7" height="68.46400000000001" fill="#ed7d31" />
<rect x="1153.5124999999998" y="294.188" width="10.7" height="197.61200000000002" fill="#4472c4" />
<rect x="1167.5124999999998" y="423.336" width="10.7" height="68.46400000000001" fill="#ed7d31" />
<text x="0" y="0" font-size="16" fill="#595959" text-anchor="end" transform="translate(630.26875,515.1) rotate(-45)">January</text>
<text x="0" y="0" font-size="16" fill="#595959" text-anchor="end" transform="translate(679.30625,515.1) rotate(-45)">February</text>
<text x="0" y="0" font-size="16" fill="#595959" text-anchor="end" transform="translate(728.34375,515.1) rotate(-45)">March</text>
<text x="0" y="0" font-size="16" fill="#595959" text-anchor="end" transform="translate(777.38125,515.1) rotate(-45)">April</text>
<text x="0" y="0" font-size="16" fill="#595959" text-anchor="end" transform="translate(826.41875,515.1) rotate(-45)">May</text>
<text x="0" y="0" font-size="16" fill="#595959" text-anchor="end" transform="translate(875.45625,515.1) rotate(-45)">June</text>
<text x="0" y="0" font-size="16" fill="#595959" text-anchor="end" transform="translate(924.4937500000001,515.1) rotate(-45)">July</text>
<text x="0" y="0" font-size="16" fill="#595959" text-anchor="end" transform="translate(973.53125,515.1) rotate(-45)">August</text>
<text x="0" y="0" font-size="16" fill="#595959" text-anchor="end" transform="translate(1022.56875,515.1) rotate(-45)">September</text>
<text x="0" y="0" font-size="16" fill="#595959" text-anchor="end" transform="translate(1071.60625,515.1) rotate(-45)">October</text>
<text x="0" y="0" font-size="16" fill="#595959" text-anchor="end" transform="translate(1120.6437500000002,515.1) rotate(-45)">November</text>
<text x="0" y="0" font-size="16" fill="#595959" text-anchor="end" transform="translate(1169.68125,515.1) rotate(-45)">December</text>
<circle cx="545" cy="236.5" r="4.2" fill="#fff" stroke="#8c8c8c" stroke-width="1.4"/>
<circle cx="878.5" cy="236.5" r="4.2" fill="#fff" stroke="#8c8c8c" stroke-width="1.4"/>
<circle cx="1212" cy="236.5" r="4.2" fill="#fff" stroke="#8c8c8c" stroke-width="1.4"/>
<circle cx="545" cy="412.0" r="4.2" fill="#fff" stroke="#8c8c8c" stroke-width="1.4"/>
<circle cx="1212" cy="412.0" r="4.2" fill="#fff" stroke="#8c8c8c" stroke-width="1.4"/>
<circle cx="545" cy="587.5" r="4.2" fill="#fff" stroke="#8c8c8c" stroke-width="1.4"/>
<circle cx="878.5" cy="587.5" r="4.2" fill="#fff" stroke="#8c8c8c" stroke-width="1.4"/>
<circle cx="1212" cy="587.5" r="4.2" fill="#fff" stroke="#8c8c8c" stroke-width="1.4"/>
<circle cx="601.25" cy="258.4" r="4.2" fill="#fff" stroke="#8c8c8c" stroke-width="1.4"/>
<circle cx="895.475" cy="258.4" r="4.2" fill="#fff" stroke="#8c8c8c" stroke-width="1.4"/>
<circle cx="1189.7" cy="258.4" r="4.2" fill="#fff" stroke="#8c8c8c" stroke-width="1.4"/>
<circle cx="601.25" cy="375.1" r="4.2" fill="#fff" stroke="#8c8c8c" stroke-width="1.4"/>
<circle cx="1189.7" cy="375.1" r="4.2" fill="#fff" stroke="#8c8c8c" stroke-width="1.4"/>
<circle cx="601.25" cy="491.8" r="4.2" fill="#fff" stroke="#8c8c8c" stroke-width="1.4"/>
<circle cx="895.475" cy="491.8" r="4.2" fill="#fff" stroke="#8c8c8c" stroke-width="1.4"/>
<circle cx="1189.7" cy="491.8" r="4.2" fill="#fff" stroke="#8c8c8c" stroke-width="1.4"/>
<rect x="1222.5" y="236.8" width="23" height="23.5" fill="#ffffff" stroke="#b4b4b4" stroke-width="1" />
<rect x="1222.5" y="269.5" width="23" height="23.5" fill="#ffffff" stroke="#b4b4b4" stroke-width="1" />
<rect x="1222.5" y="302.5" width="23" height="23.5" fill="#ffffff" stroke="#b4b4b4" stroke-width="1" />
<line x1="1233.5" y1="240.2" x2="1233.5" y2="255.8" stroke="#555" stroke-width="1" />
<line x1="1225" y1="247.5" x2="1241.5" y2="247.5" stroke="#555" stroke-width="1" />
<path d="M1241,273.2 L1242.8,275 L1234.6,283 L1232.8,281.2 Z" fill="#fff" stroke="#555" stroke-width="0.9"/><path d="M1232.6,281 L1234.8,283.2 C1233.8,286.2 1230.2,288.6 1225.8,288.2 C1226.8,285.2 1229.2,281.6 1232.6,281 Z" fill="#5b9bd5" stroke="#3a70b5" stroke-width="0.8"/>
<path d="M1225,306.5 L1242,306.5 L1235,314 L1235,322.2 L1231.8,322.2 L1231.8,314 Z" fill="none" stroke="#555" stroke-width="1"/>
<polygon points="682.5,496.6 743.7,594.7 711.1,594.7 711.1,778.7 654,778.7 654,594.7 621.4,594.7" fill="#1c5ec9"/>
<text x="20" y="19" font-size="11.5" fill="#ffffff" text-anchor="start" font-weight="normal" font-style="normal" textLength="43" lengthAdjust="spacingAndGlyphs" >AutoSave</text>
<rect x="70.2" y="8" width="31.5" height="12.6" rx="6.3" fill="none" stroke="#fff" stroke-width="1.1"/>
<circle cx="76.5" cy="14.3" r="3" fill="#fff"/>
<text x="86" y="18" font-size="8.5" fill="#ffffff" text-anchor="start" font-weight="normal" font-style="normal" textLength="10.5" lengthAdjust="spacingAndGlyphs" >Off</text>
<path d="M115.5,9.5 H126 L128.5,12 V22.5 H115.5 Z M118.5,9.5 V14 H125 V9.5 M118,22.5 V17 H126 V22.5" fill="none" stroke="#fff" stroke-width="1.1"/>
<path d="M143,11 V16 H148 M143.5,15.5 C146,11.5 153,11 154.5,16 C155.5,19.5 152.5,22.5 149,22.5" fill="none" stroke="#fff" stroke-width="1.2"/>
<path d="M162,13.5 L164,15.5 L166,13.5" fill="none" stroke="#fff" stroke-width="1"/>
<path d="M188,11 V16 H183 M187.5,15.5 C185,11.5 178,11 176.5,16 C175.5,19.5 178.5,22.5 182,22.5" fill="none" stroke="#5e9a78" stroke-width="1.2"/>
<path d="M196,13.5 L198,15.5 L200,13.5" fill="none" stroke="#5e9a78" stroke-width="1"/>
<path d="M213,10.5 H220 M213.5,13 L216.5,16 L219.5,13" fill="none" stroke="#fff" stroke-width="1.1"/>
<text x="405.8" y="18.5" font-size="11.5" fill="#f0f5f2" text-anchor="start" font-weight="normal" font-style="normal" textLength="224.2" lengthAdjust="spacingAndGlyphs" >How to Add Average line in Excel Graph  -  Excel</text>
<rect x="809.5" y="5" width="320" height="20" fill="#9fcbb4" />
<circle cx="831.5" cy="13" r="4.3" fill="none" stroke="#2e4a3a" stroke-width="1.1"/><path d="M828.3,16.3 L824.5,20.5" stroke="#2e4a3a" stroke-width="1.2"/>
<text x="851" y="19" font-size="11.5" fill="#2c3e33" text-anchor="start" font-weight="normal" font-style="normal" textLength="31" lengthAdjust="spacingAndGlyphs" >Search</text>
<text x="1646.5" y="19.5" font-size="11.5" fill="#ffffff" text-anchor="start" font-weight="normal" font-style="normal" textLength="87.5" lengthAdjust="spacingAndGlyphs" >EasyClick Academy</text>
<circle cx="1753" cy="15" r="10.3" fill="#fff"/><circle cx="1753" cy="15" r="8.5" fill="#4b74c9"/><circle cx="1752" cy="14" r="3" fill="#cfe0f7"/><path d="M1754,15 L1758,21 L1755.5,21 Z" fill="#fff"/>
<rect x="1786" y="10" width="12" height="9.5" fill="none" stroke="#fff" stroke-width="1.1"/><path d="M1786,13 H1798 M1792,13 V19.5" stroke="#fff" stroke-width="1"/>
<line x1="1823.5" y1="15" x2="1833.5" y2="15" stroke="#fff" stroke-width="1.1" />
<rect x="1860.5" y="11.5" width="8" height="8" fill="none" stroke="#fff" stroke-width="1.1"/><path d="M1862.5,11.5 V9.5 H1870.5 V17.5 H1868.5" fill="none" stroke="#fff" stroke-width="1.1"/>
<path d="M1897,10 L1907,20 M1907,10 L1897,20" stroke="#fff" stroke-width="1.2"/>
<text x="15.5" y="48.3" font-size="11.3" fill="#444" text-anchor="start" font-weight="normal" font-style="normal" textLength="17" lengthAdjust="spacingAndGlyphs" >File</text>
<text x="58.3" y="48.3" font-size="11.3" fill="#333" text-anchor="start" font-weight="normal" font-style="normal" textLength="31.7" lengthAdjust="spacingAndGlyphs" stroke="#333" stroke-width="0.45">Home</text>
<text x="110.3" y="48.3" font-size="11.3" fill="#444" text-anchor="start" font-weight="normal" font-style="normal" textLength="28" lengthAdjust="spacingAndGlyphs" >Insert</text>
<text x="160.3" y="48.3" font-size="11.3" fill="#444" text-anchor="start" font-weight="normal" font-style="normal" textLength="61.7" lengthAdjust="spacingAndGlyphs" >Page Layout</text>
<text x="243.3" y="48.3" font-size="11.3" fill="#444" text-anchor="start" font-weight="normal" font-style="normal" textLength="46.2" lengthAdjust="spacingAndGlyphs" >Formulas</text>
<text x="310.8" y="48.3" font-size="11.3" fill="#444" text-anchor="start" font-weight="normal" font-style="normal" textLength="23.5" lengthAdjust="spacingAndGlyphs" >Data</text>
<text x="355.5" y="48.3" font-size="11.3" fill="#444" text-anchor="start" font-weight="normal" font-style="normal" textLength="35.5" lengthAdjust="spacingAndGlyphs" >Review</text>
<text x="411.7" y="48.3" font-size="11.3" fill="#444" text-anchor="start" font-weight="normal" font-style="normal" textLength="23.6" lengthAdjust="spacingAndGlyphs" >View</text>
<text x="456.3" y="48.3" font-size="11.3" fill="#444" text-anchor="start" font-weight="normal" font-style="normal" textLength="23.4" lengthAdjust="spacingAndGlyphs" >Help</text>
<text x="501.3" y="48.3" font-size="11.3" fill="#3b7a59" text-anchor="start" font-weight="normal" font-style="normal" textLength="65.7" lengthAdjust="spacingAndGlyphs" >Chart Design</text>
<text x="589.2" y="48.3" font-size="11.3" fill="#3b7a59" text-anchor="start" font-weight="normal" font-style="normal" textLength="35" lengthAdjust="spacingAndGlyphs" >Format</text>
<rect x="58.3" y="52.8" width="31.7" height="2.6" fill="#1f6e43" rx="1"/>
<rect x="1763.5" y="32.5" width="54.5" height="20.5" fill="#fbfbfa" stroke="#e3e1df" stroke-width="1" />
<path d="M1769,40 V48.5 H1779 V45 M1772.5,44 C1773.5,40.5 1776,39 1779.5,39 M1777.5,36.5 L1780,39 L1777.5,41.5" fill="none" stroke="#555" stroke-width="1"/>
<text x="1783.3" y="48.5" font-size="12" fill="#3b5f4b" text-anchor="start" font-weight="bold" font-style="normal" textLength="28.7" lengthAdjust="spacingAndGlyphs" >Share</text>
<rect x="1826.5" y="32.5" width="81.5" height="20.5" fill="#fbfbfa" stroke="#e3e1df" stroke-width="1" />
<path d="M1833.5,37.5 H1845 V45 H1838 L1835,48 V45 H1833.5 Z" fill="none" stroke="#555" stroke-width="1"/>
<text x="1846.5" y="48.5" font-size="12" fill="#3b5f4b" text-anchor="start" font-weight="bold" font-style="normal" textLength="54.8" lengthAdjust="spacingAndGlyphs" >Comments</text>
<line x1="143.5" y1="60" x2="143.5" y2="141" stroke="#d6d4d2" stroke-width="1" />
<line x1="339.5" y1="60" x2="339.5" y2="141" stroke="#d6d4d2" stroke-width="1" />
<line x1="582.5" y1="60" x2="582.5" y2="141" stroke="#d6d4d2" stroke-width="1" />
<line x1="715.5" y1="60" x2="715.5" y2="141" stroke="#d6d4d2" stroke-width="1" />
<line x1="1325.5" y1="60" x2="1325.5" y2="141" stroke="#d6d4d2" stroke-width="1" />
<line x1="1449.5" y1="60" x2="1449.5" y2="141" stroke="#d6d4d2" stroke-width="1" />
<line x1="1626.5" y1="60" x2="1626.5" y2="141" stroke="#d6d4d2" stroke-width="1" />
<line x1="1676.5" y1="60" x2="1676.5" y2="141" stroke="#d6d4d2" stroke-width="1" />
<path d="M16,66.5 H23 V64.5 H28 V66.5 H35 V86 H16 Z" fill="#f7f7f7" stroke="#c4c4c4" stroke-width="1.1"/><rect x="27.5" y="74" width="11.5" height="15" fill="#f9f9f9" stroke="#bdbdbd" stroke-width="1.1"/>
<text x="13" y="103.7" font-size="11.3" fill="#bdbbb9" text-anchor="start" font-weight="normal" font-style="normal" textLength="24" lengthAdjust="spacingAndGlyphs" >Paste</text>
<path d="M22.8,112.9 L25,115.1 L27.2,112.9" fill="none" stroke="#c4c4c4" stroke-width="1"/>
<path d="M49,65 L54.5,74.5 M56.5,65 L51,74.5" stroke="#555" stroke-width="1"/><circle cx="50.5" cy="76" r="2.2" fill="none" stroke="#4a7dc8" stroke-width="1.2"/><circle cx="55.5" cy="76" r="2.2" fill="none" stroke="#4a7dc8" stroke-width="1.2"/>
<text x="62.5" y="75.6" font-size="11.3" fill="#444444" text-anchor="start" font-weight="normal" font-style="normal" textLength="15.5" lengthAdjust="spacingAndGlyphs" >Cut</text>
<path d="M49.5,95.5 H46.5 V85.5 H52 L53.5,87" fill="none" stroke="#555" stroke-width="1"/><path d="M51.5,88.5 H56.5 L59.5,91.5 V99 H51.5 Z M53.5,94 H57.5 M53.5,96 H57.5" fill="none" stroke="#555" stroke-width="1"/>
<text x="62.5" y="96.9" font-size="11.3" fill="#444444" text-anchor="start" font-weight="normal" font-style="normal" textLength="23.1" lengthAdjust="spacingAndGlyphs" >Copy</text>
<path d="M96.6,91.4 L98.8,93.6 L101.0,91.4" fill="none" stroke="#444444" stroke-width="1"/>
<path d="M47,113 L53,107.5 L59,110.5 L54,117 Z M53,110 L58,105.5" fill="none" stroke="#c2c0be" stroke-width="1.1"/>
<text x="62.5" y="118" font-size="11.3" fill="#b0aeac" text-anchor="start" font-weight="normal" font-style="normal" textLength="66.9" lengthAdjust="spacingAndGlyphs" >Format Painter</text>
<text x="43.8" y="139.4" font-size="11.3" fill="#555555" text-anchor="start" font-weight="normal" font-style="normal" textLength="41.2" lengthAdjust="spacingAndGlyphs" >Clipboard</text>
<path d="M133,140 V133 H140 M136,136 L140.5,140.5 M140.5,137 V140.5 H137" fill="none" stroke="#888" stroke-width="0.9"/>
<rect x="150.8" y="68.3" width="97.5" height="19.2" fill="#e4e2e0" stroke="#dad8d6" stroke-width="0.8" />
<rect x="248.3" y="68.3" width="44.2" height="19.2" fill="#e4e2e0" stroke="#dad8d6" stroke-width="0.8" />
<path d="M241,77.0 L243,79.0 L245,77.0" fill="none" stroke="#c0bebc" stroke-width="1"/>
<path d="M284.7,77.0 L286.7,79.0 L288.7,77.0" fill="none" stroke="#c0bebc" stroke-width="1"/>
<text x="296.5" y="82" font-size="14" fill="#9a9896" text-anchor="start" font-weight="normal" font-style="normal" textLength="9.5" lengthAdjust="spacingAndGlyphs" >A</text>
<path d="M306,73.5 L307.5,71.5 L309,73.5" fill="none" stroke="#9a9896" stroke-width="0.9"/>
<text x="317.5" y="82" font-size="12" fill="#9a9896" text-anchor="start" font-weight="normal" font-style="normal" textLength="8.5" lengthAdjust="spacingAndGlyphs" >A</text>
<path d="M326,71.5 L327.5,73.5 L329,71.5" fill="none" stroke="#9a9896" stroke-width="0.9"/>
<text x="157.5" y="110.3" font-size="11.5" fill="#9a9896" text-anchor="start" font-weight="bold" font-style="normal" textLength="7" lengthAdjust="spacingAndGlyphs" >B</text>
<text x="178" y="110.3" font-size="11.5" fill="#9a9896" text-anchor="start" font-weight="normal" font-style="italic" textLength="4.5" lengthAdjust="spacingAndGlyphs" >I</text>
<text x="195.8" y="110" font-size="11.5" fill="#9a9896" text-anchor="start" font-weight="normal" font-style="normal" textLength="8.4" lengthAdjust="spacingAndGlyphs" >U</text>
<line x1="195.8" y1="112.3" x2="204.2" y2="112.3" stroke="#9a9896" stroke-width="1" />
<path d="M214.7,106.5 L216.7,108.5 L218.7,106.5" fill="none" stroke="#c8c6c4" stroke-width="1"/>
<line x1="226.5" y1="98" x2="226.5" y2="114" stroke="#d6d4d2" stroke-width="1" />
<rect x="232.5" y="100.5" width="12.5" height="12" fill="none" stroke="#888" stroke-width="1.1"/><path d="M238.75,100.5 V112.5 M232.5,106.5 H245" stroke="#888" stroke-width="1.1"/>
<path d="M253,106.5 L255,108.5 L257,106.5" fill="none" stroke="#c8c6c4" stroke-width="1"/>
<line x1="264.7" y1="98" x2="264.7" y2="114" stroke="#d6d4d2" stroke-width="1" />
<path d="M273,105 L278.5,99.5 L283,104 L278,109 Z" fill="none" stroke="#555" stroke-width="1"/><path d="M282,104 C283.5,106 283.5,107.5 282.5,108" fill="none" stroke="#555" stroke-width="0.9"/>
<rect x="270.8" y="110.5" width="13.5" height="3" fill="#e97527" />
<path d="M290.8,106.4 L293,108.6 L295.2,106.4" fill="none" stroke="#444444" stroke-width="1"/>
<text x="303.5" y="110" font-size="13" fill="#666" text-anchor="start" font-weight="normal" font-style="normal" textLength="12.5" lengthAdjust="spacingAndGlyphs" >A</text>
<rect x="303" y="110.8" width="13.8" height="2.5" fill="#9e9c9a" />
<path d="M323.6,106.4 L325.8,108.6 L328.0,106.4" fill="none" stroke="#444444" stroke-width="1"/>
<text x="225.8" y="139.4" font-size="11.3" fill="#555555" text-anchor="start" font-weight="normal" font-style="normal" textLength="17.5" lengthAdjust="spacingAndGlyphs" >Font</text>
<path d="M328.5,139.7 V132.7 H335.5 M331.5,135.7 L336.0,140.2 M336.0,136.7 V140.2 H332.5" fill="none" stroke="#888" stroke-width="0.9"/>
<line x1="350.0" y1="70.6" x2="362.5" y2="70.6" stroke="#9a9a9a" stroke-width="1" />
<line x1="352.25" y1="74.35" x2="360.25" y2="74.35" stroke="#9a9a9a" stroke-width="1" />
<line x1="350.0" y1="78.1" x2="362.5" y2="78.1" stroke="#9a9a9a" stroke-width="1" />
<line x1="370.0" y1="73.0" x2="382.5" y2="73.0" stroke="#9a9a9a" stroke-width="1" />
<line x1="372.25" y1="76.75" x2="380.25" y2="76.75" stroke="#9a9a9a" stroke-width="1" />
<line x1="370.0" y1="80.5" x2="382.5" y2="80.5" stroke="#9a9a9a" stroke-width="1" />
<line x1="390.5" y1="76.4" x2="403.0" y2="76.4" stroke="#9a9a9a" stroke-width="1" />
<line x1="392.75" y1="80.15" x2="400.75" y2="80.15" stroke="#9a9a9a" stroke-width="1" />
<line x1="390.5" y1="83.9" x2="403.0" y2="83.9" stroke="#9a9a9a" stroke-width="1" />
<line x1="409.5" y1="68.5" x2="409.5" y2="87.3" stroke="#d6d4d2" stroke-width="1" />
<path d="M415,78 L421,72 M417,82 L427,72 M423,72 L427,72 L427,76" fill="none" stroke="#9a9896" stroke-width="1"/><text x="414" y="78" font-size="8" fill="#9a9896" transform="rotate(-45 418 76)">ab</text>
<path d="M433.8,76.5 L435.8,78.5 L437.8,76.5" fill="none" stroke="#c0bebc" stroke-width="1"/>
<line x1="456.7" y1="66.5" x2="456.7" y2="118.5" stroke="#d6d4d2" stroke-width="1" />
<text x="465" y="77" font-size="8" fill="#a8a6a4" text-anchor="start" font-weight="normal" font-style="normal" textLength="9" lengthAdjust="spacingAndGlyphs" >ab</text>
<text x="465" y="83.5" font-size="7" fill="#a8a6a4" text-anchor="start" font-weight="normal" font-style="normal" >c</text>
<path d="M470,80.5 H477 V83 H473" fill="none" stroke="#a8a6a4" stroke-width="0.9"/>
<text x="480.6" y="82" font-size="11.3" fill="#b0aeac" text-anchor="start" font-weight="normal" font-style="normal" textLength="44.8" lengthAdjust="spacingAndGlyphs" >Wrap Text</text>
<line x1="350" y1="100.6" x2="362.5" y2="100.6" stroke="#9a9a9a" stroke-width="1.1" />
<line x1="350" y1="104.25" x2="359" y2="104.25" stroke="#9a9a9a" stroke-width="1.1" />
<line x1="350" y1="107.89999999999999" x2="362.5" y2="107.89999999999999" stroke="#9a9a9a" stroke-width="1.1" />
<line x1="350" y1="111.55" x2="359" y2="111.55" stroke="#9a9a9a" stroke-width="1.1" />
<line x1="370.0" y1="100.6" x2="382.5" y2="100.6" stroke="#9a9a9a" stroke-width="1" />
<line x1="371.75" y1="104.25" x2="380.75" y2="104.25" stroke="#9a9a9a" stroke-width="1" />
<line x1="370.0" y1="107.89999999999999" x2="382.5" y2="107.89999999999999" stroke="#9a9a9a" stroke-width="1" />
<line x1="371.75" y1="111.55" x2="380.75" y2="111.55" stroke="#9a9a9a" stroke-width="1" />
<line x1="390.5" y1="100.6" x2="403" y2="100.6" stroke="#9a9a9a" stroke-width="1" />
<line x1="394" y1="104.25" x2="403" y2="104.25" stroke="#9a9a9a" stroke-width="1" />
<line x1="390.5" y1="107.89999999999999" x2="403" y2="107.89999999999999" stroke="#9a9a9a" stroke-width="1" />
<line x1="394" y1="111.55" x2="403" y2="111.55" stroke="#9a9a9a" stroke-width="1" />
<line x1="409.8" y1="98" x2="409.8" y2="113" stroke="#d6d4d2" stroke-width="1" />
<line x1="416.0" y1="100.6" x2="428.5" y2="100.6" stroke="#9a9a9a" stroke-width="1" />
<line x1="435.8" y1="100.6" x2="448.3" y2="100.6" stroke="#9a9a9a" stroke-width="1" />
<line x1="421.5" y1="104.25" x2="428.5" y2="104.25" stroke="#9a9a9a" stroke-width="1" />
<line x1="441.3" y1="104.25" x2="448.3" y2="104.25" stroke="#9a9a9a" stroke-width="1" />
<line x1="421.5" y1="107.89999999999999" x2="428.5" y2="107.89999999999999" stroke="#9a9a9a" stroke-width="1" />
<line x1="441.3" y1="107.89999999999999" x2="448.3" y2="107.89999999999999" stroke="#9a9a9a" stroke-width="1" />
<line x1="416.0" y1="111.55" x2="428.5" y2="111.55" stroke="#9a9a9a" stroke-width="1" />
<line x1="435.8" y1="111.55" x2="448.3" y2="111.55" stroke="#9a9a9a" stroke-width="1" />
<path d="M420,104 L417,106 L420,108" fill="none" stroke="#8a8a8a" stroke-width="1"/><path d="M437,104 L440,106 L437,108" fill="none" stroke="#8a8a8a" stroke-width="1"/>
<rect x="463.5" y="100" width="13" height="12" fill="none" stroke="#a8a6a4" stroke-width="1"/><path d="M463.5,104 H476.5 M463.5,108 H476.5 M466,106 H474" stroke="#a8a6a4" stroke-width="0.9"/>
<text x="480" y="111.3" font-size="11.3" fill="#b0aeac" text-anchor="start" font-weight="normal" font-style="normal" textLength="74.6" lengthAdjust="spacingAndGlyphs" >Merge &amp; Center</text>
<path d="M566,106.5 L568,108.5 L570,106.5" fill="none" stroke="#c8c6c4" stroke-width="1"/>
<text x="432.7" y="139.4" font-size="11.3" fill="#555555" text-anchor="start" font-weight="normal" font-style="normal" textLength="43.1" lengthAdjust="spacingAndGlyphs" >Alignment</text>
<path d="M571.4,139.7 V132.7 H578.4 M574.4,135.7 L578.9,140.2 M578.9,136.7 V140.2 H575.4" fill="none" stroke="#888" stroke-width="0.9"/>
<rect x="590" y="68.5" width="117.7" height="18.8" fill="#e4e2e0" stroke="#d6d4d2" stroke-width="0.8" />
<text x="592" y="82" font-size="11" fill="#bab8b6" text-anchor="start" font-weight="normal" font-style="normal" textLength="35.5" lengthAdjust="spacingAndGlyphs" >General</text>
<path d="M699.5,77.0 L701.5,79.0 L703.5,77.0" fill="none" stroke="#c0bebc" stroke-width="1"/>
<text x="595" y="112.5" font-size="14" fill="#9a9896" text-anchor="start" font-weight="normal" font-style="normal" textLength="7.5" lengthAdjust="spacingAndGlyphs" >$</text>
<path d="M613,106.5 L615,108.5 L617,106.5" fill="none" stroke="#c8c6c4" stroke-width="1"/>
<text x="625.4" y="112.5" font-size="14" fill="#9a9896" text-anchor="start" font-weight="normal" font-style="normal" textLength="12.9" lengthAdjust="spacingAndGlyphs" >%</text>
<circle cx="652.2" cy="104.8" r="2.6" fill="#9a9896"/><path d="M654.6,105 C654.8,108.5 653,111 650,112.5" fill="none" stroke="#9a9896" stroke-width="1.4"/>
<line x1="665.4" y1="98" x2="665.4" y2="114" stroke="#d6d4d2" stroke-width="1" />
<text x="671" y="106" font-size="7.5" fill="#a8a6a4" text-anchor="start" font-weight="normal" font-style="normal" >←.0</text>
<text x="676" y="112.5" font-size="7.5" fill="#a8a6a4" text-anchor="start" font-weight="normal" font-style="normal" >00</text>
<text x="693" y="106" font-size="7.5" fill="#a8a6a4" text-anchor="start" font-weight="normal" font-style="normal" >00</text>
<text x="690" y="112.5" font-size="7.5" fill="#a8a6a4" text-anchor="start" font-weight="normal" font-style="normal" >→.0</text>
<text x="625" y="139.4" font-size="11.3" fill="#555555" text-anchor="start" font-weight="normal" font-style="normal" textLength="32.7" lengthAdjust="spacingAndGlyphs" >Number</text>
<path d="M703.7,139.7 V132.7 H710.7 M706.7,135.7 L711.2,140.2 M711.2,136.7 V140.2 H707.7" fill="none" stroke="#888" stroke-width="0.9"/>
<rect x="742" y="66.5" width="25" height="19" fill="#f4f4f4" stroke="#a7a7a7" stroke-width="1"/>
<line x1="748.25" y1="66.5" x2="748.25" y2="85.5" stroke="#a7a7a7" stroke-width="0.8" />
<line x1="754.5" y1="66.5" x2="754.5" y2="85.5" stroke="#a7a7a7" stroke-width="0.8" />
<line x1="760.75" y1="66.5" x2="760.75" y2="85.5" stroke="#a7a7a7" stroke-width="0.8" />
<line x1="742" y1="71.25" x2="767" y2="71.25" stroke="#a7a7a7" stroke-width="0.8" />
<line x1="742" y1="76.0" x2="767" y2="76.0" stroke="#a7a7a7" stroke-width="0.8" />
<line x1="742" y1="80.75" x2="767" y2="80.75" stroke="#a7a7a7" stroke-width="0.8" />
<rect x="746" y="71" width="10" height="9.5" fill="#b8b8b8" />
<rect x="800.5" y="66.5" width="25" height="19" fill="#f4f4f4" stroke="#a7a7a7" stroke-width="1"/>
<line x1="806.75" y1="66.5" x2="806.75" y2="85.5" stroke="#a7a7a7" stroke-width="0.8" />
<line x1="813.0" y1="66.5" x2="813.0" y2="85.5" stroke="#a7a7a7" stroke-width="0.8" />
<line x1="819.25" y1="66.5" x2="819.25" y2="85.5" stroke="#a7a7a7" stroke-width="0.8" />
<line x1="800.5" y1="71.25" x2="825.5" y2="71.25" stroke="#a7a7a7" stroke-width="0.8" />
<line x1="800.5" y1="76.0" x2="825.5" y2="76.0" stroke="#a7a7a7" stroke-width="0.8" />
<line x1="800.5" y1="80.75" x2="825.5" y2="80.75" stroke="#a7a7a7" stroke-width="0.8" />
<path d="M812,89 L826,75 M815,87 L824,79" stroke="#a7a7a7" stroke-width="2"/>
<text x="728.3" y="102.5" font-size="11.3" fill="#b0aeac" text-anchor="start" font-weight="normal" font-style="normal" textLength="53" lengthAdjust="spacingAndGlyphs" >Conditional</text>
<text x="725" y="116.7" font-size="11.3" fill="#b0aeac" text-anchor="start" font-weight="normal" font-style="normal" textLength="50" lengthAdjust="spacingAndGlyphs" >Formatting</text>
<path d="M779.3,112.5 L781.3,114.5 L783.3,112.5" fill="none" stroke="#c8c6c4" stroke-width="1"/>
<text x="790.8" y="102.5" font-size="11.3" fill="#b0aeac" text-anchor="start" font-weight="normal" font-style="normal" textLength="44.5" lengthAdjust="spacingAndGlyphs" >Format as</text>
<text x="796.7" y="116.7" font-size="11.3" fill="#b0aeac" text-anchor="start" font-weight="normal" font-style="normal" textLength="22.3" lengthAdjust="spacingAndGlyphs" >Table</text>
<path d="M823.5,112.5 L825.5,114.5 L827.5,112.5" fill="none" stroke="#c8c6c4" stroke-width="1"/>
<rect x="839.5" y="62.5" width="477" height="53.3" fill="#ffffff" stroke="#dedcda" stroke-width="1" />
<rect x="840.5" y="63.5" width="89.5" height="23" fill="#ffffff" />
<text x="846.7" y="80.2" font-size="11.5" fill="#555" text-anchor="start" font-weight="normal" font-style="normal" textLength="38.3" lengthAdjust="spacingAndGlyphs" >Normal</text>
<rect x="935.8" y="67.5" width="86.7" height="18.3" fill="#e1e1e3" />
<text x="939" y="80.2" font-size="11.5" fill="#9a9a9a" text-anchor="start" font-weight="normal" font-style="normal" textLength="18.5" lengthAdjust="spacingAndGlyphs" >Bad</text>
<rect x="1028" y="67.5" width="87" height="18.3" fill="#e3e3e3" />
<text x="1031.3" y="80.2" font-size="11.5" fill="#a0a0a0" text-anchor="start" font-weight="normal" font-style="normal" textLength="25.5" lengthAdjust="spacingAndGlyphs" >Good</text>
<rect x="1120" y="67.5" width="88" height="18.3" fill="#e8e5e5" />
<text x="1124.2" y="80.2" font-size="11.5" fill="#b4b4b4" text-anchor="start" font-weight="normal" font-style="normal" textLength="36" lengthAdjust="spacingAndGlyphs" >Neutral</text>
<rect x="1212.5" y="67.5" width="87.5" height="18.3" fill="#eeeeee" stroke="#dcdcdc" stroke-width="1" />
<text x="1216.7" y="80.2" font-size="11.5" fill="#bdbdbd" text-anchor="start" font-weight="normal" font-style="normal" textLength="59" lengthAdjust="spacingAndGlyphs" >Calculation</text>
<rect x="842.5" y="91.3" width="87.5" height="19" fill="#a5a5a5" stroke="#8f8f8f" stroke-width="1" />
<text x="846.7" y="104.5" font-size="11.5" fill="#ffffff" text-anchor="start" font-weight="bold" font-style="normal" textLength="53.3" lengthAdjust="spacingAndGlyphs" >Check Cell</text>
<text x="939" y="104.5" font-size="11.5" fill="#b4b4b4" text-anchor="start" font-weight="normal" font-style="italic" textLength="75" lengthAdjust="spacingAndGlyphs" >Explanatory ...</text>
<rect x="1028" y="91.3" width="87" height="19" fill="#dedede" stroke="#c9c9c9" stroke-width="1" />
<text x="1031.3" y="104.5" font-size="11.5" fill="#a2a2a2" text-anchor="start" font-weight="normal" font-style="normal" textLength="25" lengthAdjust="spacingAndGlyphs" >Input</text>
<line x1="1120" y1="110" x2="1208" y2="110" stroke="#e9dcdc" stroke-width="1.2" />
<text x="1124.2" y="104.5" font-size="11.5" fill="#c8c2c2" text-anchor="start" font-weight="normal" font-style="normal" textLength="57" lengthAdjust="spacingAndGlyphs" >Linked Cell</text>
<rect x="1212.5" y="91.3" width="87.5" height="19" fill="#eef0f6" stroke="#dcdcdc" stroke-width="1" />
<text x="1216.7" y="104.5" font-size="11.5" fill="#555" text-anchor="start" font-weight="normal" font-style="normal" textLength="25.8" lengthAdjust="spacingAndGlyphs" >Note</text>
<rect x="1304.7" y="62.5" width="11.5" height="17" fill="#f6f6f6" stroke="#dedcda" stroke-width="0.8" />
<rect x="1304.7" y="79.5" width="11.5" height="17.5" fill="#f6f6f6" stroke="#dedcda" stroke-width="0.8" />
<rect x="1304.7" y="97" width="11.5" height="18.8" fill="#f6f6f6" stroke="#dedcda" stroke-width="0.8" />
<path d="M1308.5,72 L1310.5,70 L1312.5,72" fill="none" stroke="#b0b0b0" stroke-width="0.9"/><path d="M1308.5,87 L1310.5,89 L1312.5,87" fill="none" stroke="#b0b0b0" stroke-width="0.9"/><path d="M1308.5,102.5 H1312.5 M1308.5,105 L1310.5,107 L1312.5,105" fill="none" stroke="#b0b0b0" stroke-width="0.9"/>
<text x="1009" y="139.4" font-size="11.3" fill="#555555" text-anchor="start" font-weight="normal" font-style="normal" textLength="22.7" lengthAdjust="spacingAndGlyphs" >Styles</text>
<rect x="1338.5" y="66" width="26" height="20" fill="#f4f4f4" stroke="#a8a8a8" stroke-width="1"/>
<line x1="1347.1666666666667" y1="66" x2="1347.1666666666667" y2="86" stroke="#a8a8a8" stroke-width="0.8" />
<line x1="1355.8333333333333" y1="66" x2="1355.8333333333333" y2="86" stroke="#a8a8a8" stroke-width="0.8" />
<line x1="1338.5" y1="72.66666666666667" x2="1364.5" y2="72.66666666666667" stroke="#a8a8a8" stroke-width="0.8" />
<line x1="1338.5" y1="79.33333333333333" x2="1364.5" y2="79.33333333333333" stroke="#a8a8a8" stroke-width="0.8" />
<path d="M1336,76 H1350 M1340,73 L1336,76 L1340,79" stroke="#999" stroke-width="1.6" fill="none"/>
<rect x="1352" y="72.5" width="13" height="7" fill="#c8c8c8" />
<text x="1338.3" y="104.1" font-size="11.3" fill="#444444" text-anchor="start" font-weight="normal" font-style="normal" textLength="25.7" lengthAdjust="spacingAndGlyphs" >Insert</text>
<path d="M1348.6,112.7 L1350.8,114.89999999999999 L1353.0,112.7" fill="none" stroke="#444444" stroke-width="1"/>
<rect x="1375" y="66" width="26" height="20" fill="#f4f4f4" stroke="#a8a8a8" stroke-width="1"/>
<line x1="1383.6666666666667" y1="66" x2="1383.6666666666667" y2="86" stroke="#a8a8a8" stroke-width="0.8" />
<line x1="1392.3333333333333" y1="66" x2="1392.3333333333333" y2="86" stroke="#a8a8a8" stroke-width="0.8" />
<line x1="1375" y1="72.66666666666667" x2="1401" y2="72.66666666666667" stroke="#a8a8a8" stroke-width="0.8" />
<line x1="1375" y1="79.33333333333333" x2="1401" y2="79.33333333333333" stroke="#a8a8a8" stroke-width="0.8" />
<path d="M1392,70 L1401,80 M1401,70 L1392,80" stroke="#aaa" stroke-width="1.1"/>
<rect x="1380" y="72.5" width="11" height="7" fill="#c8c8c8" />
<text x="1372.4" y="104.1" font-size="11.3" fill="#444444" text-anchor="start" font-weight="normal" font-style="normal" textLength="29.5" lengthAdjust="spacingAndGlyphs" >Delete</text>
<path d="M1384.8,112.7 L1387,114.89999999999999 L1389.2,112.7" fill="none" stroke="#444444" stroke-width="1"/>
<path d="M1417,62.5 H1430" stroke="#3b73c4" stroke-width="1.3" stroke-dasharray="2,1"/>
<rect x="1411" y="66" width="25.5" height="20" fill="#f4f4f4" stroke="#444" stroke-width="1"/>
<line x1="1419.5" y1="66" x2="1419.5" y2="86" stroke="#444" stroke-width="0.8" />
<line x1="1428.0" y1="66" x2="1428.0" y2="86" stroke="#444" stroke-width="0.8" />
<line x1="1411" y1="72.66666666666667" x2="1436.5" y2="72.66666666666667" stroke="#444" stroke-width="0.8" />
<line x1="1411" y1="79.33333333333333" x2="1436.5" y2="79.33333333333333" stroke="#444" stroke-width="0.8" />
<rect x="1419.5" y="72.7" width="8.5" height="6.7" fill="#4d8de0" />
<text x="1408.2" y="102.2" font-size="11.3" fill="#444444" text-anchor="start" font-weight="normal" font-style="normal" textLength="31.6" lengthAdjust="spacingAndGlyphs" >Format</text>
<path d="M1420.8,111.30000000000001 L1423,113.5 L1425.2,111.30000000000001" fill="none" stroke="#444444" stroke-width="1"/>
<text x="1377.8" y="139.8" font-size="11.3" fill="#555555" text-anchor="start" font-weight="normal" font-style="normal" textLength="20.2" lengthAdjust="spacingAndGlyphs" >Cells</text>
<path d="M1471.5,63.5 H1461.5 L1467,68 L1461.5,73.5 H1471.5" fill="none" stroke="#aaa" stroke-width="1.1"/>
<text x="1475.7" y="73.3" font-size="11.3" fill="#b0aeac" text-anchor="start" font-weight="normal" font-style="normal" textLength="42.8" lengthAdjust="spacingAndGlyphs" >AutoSum</text>
<path d="M1530,68.5 L1532,70.5 L1534,68.5" fill="none" stroke="#c8c6c4" stroke-width="1"/>
<rect x="1460" y="83" width="13" height="11.5" fill="none" stroke="#aaa" stroke-width="1"/><path d="M1466.5,85 V91 M1464,88.5 L1466.5,91 L1469,88.5" fill="none" stroke="#aaa" stroke-width="1"/>
<text x="1476" y="93.5" font-size="11.3" fill="#b0aeac" text-anchor="start" font-weight="normal" font-style="normal" textLength="13.5" lengthAdjust="spacingAndGlyphs" >Fill</text>
<path d="M1492.4,88.8 L1494.4,90.8 L1496.4,88.8" fill="none" stroke="#c8c6c4" stroke-width="1"/>
<path d="M1461,110 L1469,102.5 L1473.5,107 L1466,114.5 Z" fill="#e5d5f2" stroke="#9b59c8" stroke-width="1.3"/><path d="M1461,110 L1465.5,114.5" stroke="#9b59c8" stroke-width="1.3"/>
<text x="1475.7" y="113.8" font-size="11.3" fill="#444444" text-anchor="start" font-weight="normal" font-style="normal" textLength="23.5" lengthAdjust="spacingAndGlyphs" >Clear</text>
<path d="M1503.8,108.4 L1506,110.6 L1508.2,108.4" fill="none" stroke="#444444" stroke-width="1"/>
<text x="1544.5" y="74" font-size="10" fill="#aaa" text-anchor="start" font-weight="normal" font-style="normal" >A</text>
<text x="1544.5" y="87.5" font-size="10" fill="#aaa" text-anchor="start" font-weight="normal" font-style="normal" >Z</text>
<path d="M1554,71 H1570 L1564,78.5 V86 H1560 V78.5 Z" fill="none" stroke="#aaa" stroke-width="1.1"/>
<text x="1543.5" y="103.2" font-size="11.3" fill="#b0aeac" text-anchor="start" font-weight="normal" font-style="normal" textLength="28.9" lengthAdjust="spacingAndGlyphs" >Sort &amp;</text>
<text x="1542.5" y="116.7" font-size="11.3" fill="#b0aeac" text-anchor="start" font-weight="normal" font-style="normal" textLength="22.2" lengthAdjust="spacingAndGlyphs" >Filter</text>
<path d="M1568.5,112.5 L1570.5,114.5 L1572.5,112.5" fill="none" stroke="#c8c6c4" stroke-width="1"/>
<circle cx="1600.5" cy="73.5" r="9.5" fill="none" stroke="#444" stroke-width="1.2"/><path d="M1593.8,80.2 L1585.5,88.5" stroke="#444" stroke-width="1.3"/>
<text x="1583" y="103.2" font-size="11.3" fill="#444444" text-anchor="start" font-weight="normal" font-style="normal" textLength="30.3" lengthAdjust="spacingAndGlyphs" >Find &amp;</text>
<text x="1579.7" y="116.7" font-size="11.3" fill="#444444" text-anchor="start" font-weight="normal" font-style="normal" textLength="27.3" lengthAdjust="spacingAndGlyphs" >Select</text>
<path d="M1611.1,112.4 L1613.3,114.6 L1615.5,112.4" fill="none" stroke="#444444" stroke-width="1"/>
<text x="1523.3" y="139.8" font-size="11.3" fill="#555555" text-anchor="start" font-weight="normal" font-style="normal" textLength="28.9" lengthAdjust="spacingAndGlyphs" >Editing</text>
<path d="M1655,63 L1643,78 H1651 L1646,88 L1661,72 H1653 Z" fill="#d0d0d0" stroke="#b8b8b8" stroke-width="1"/>
<text x="1639.8" y="102.2" font-size="11.3" fill="#b0aeac" text-anchor="start" font-weight="normal" font-style="normal" textLength="23.2" lengthAdjust="spacingAndGlyphs" >Ideas</text>
<text x="1639.8" y="139.8" font-size="11.3" fill="#555555" text-anchor="start" font-weight="normal" font-style="normal" textLength="23.2" lengthAdjust="spacingAndGlyphs" >Ideas</text>
<path d="M1904.5,139 L1908.5,135 L1912.5,139" fill="none" stroke="#666" stroke-width="1.1"/>
<rect x="5.5" y="152.5" width="86.5" height="20" fill="#ffffff" />
<text x="8.5" y="167.5" font-size="11.5" fill="#444" text-anchor="start" font-weight="normal" font-style="normal" textLength="37.5" lengthAdjust="spacingAndGlyphs" >Chart 1</text>
<path d="M84.5,161.5 L86,163 L87.5,161.5" fill="#777" stroke="#777" stroke-width="0.8"/>
<circle cx="105.5" cy="158" r="0.9" fill="#aaa"/>
<circle cx="105.5" cy="162" r="0.9" fill="#aaa"/>
<circle cx="105.5" cy="166" r="0.9" fill="#aaa"/>
<rect x="119.5" y="152.5" width="93" height="20" fill="#ffffff" />
<path d="M130.5,158.5 L137.5,165.5 M137.5,158.5 L130.5,165.5" stroke="#c4c4c4" stroke-width="1.1"/>
<path d="M161,162 L164.5,165.5 L171,158.5" fill="none" stroke="#c4c4c4" stroke-width="1.2"/>
<text x="192.5" y="166.5" font-size="12" fill="#777" text-anchor="start" font-weight="normal" font-style="italic" >f</text>
<text x="197" y="168" font-size="8.5" fill="#777" text-anchor="start" font-weight="normal" font-style="italic" >x</text>
<rect x="217" y="152.5" width="1698" height="20" fill="#ffffff" />
<path d="M1905.5,161.5 L1908.5,164.5 L1911.5,161.5" fill="none" stroke="#999" stroke-width="0.9"/>
<path d="M20,1050 L17.5,1052 L20,1054" fill="none" stroke="#b8b8b8" stroke-width="1"/><path d="M35,1050 L37.5,1052 L35,1054" fill="none" stroke="#b8b8b8" stroke-width="1"/>
<line x1="0" y1="1041.5" x2="1920" y2="1041.5" stroke="#d2d2d2" stroke-width="1" />
<line x1="0" y1="1060.5" x2="1920" y2="1060.5" stroke="#d6d6d6" stroke-width="1" />
<rect x="64" y="1041" width="38" height="18.5" fill="#fbfbfb" />
<rect x="64" y="1058" width="38" height="1.4" fill="#4c9470" />
<text x="68.5" y="1055.2" font-size="12" fill="#2b6b48" text-anchor="start" font-weight="bold" font-style="normal" textLength="28.5" lengthAdjust="spacingAndGlyphs" >Sales</text>
<circle cx="130" cy="1051.5" r="5.5" fill="none" stroke="#888" stroke-width="0.9"/><path d="M127,1051.5 H133 M130,1048.5 V1054.5" stroke="#888" stroke-width="0.9"/>
<circle cx="1151.5" cy="1046" r="0.8" fill="#aaa"/>
<circle cx="1151.5" cy="1050" r="0.8" fill="#aaa"/>
<circle cx="1151.5" cy="1054" r="0.8" fill="#aaa"/>
<rect x="1160.5" y="1043.5" width="743" height="14" fill="#ffffff" stroke="#c8c8c8" stroke-width="1" />
<rect x="1850.5" y="1044" width="39" height="13" fill="#d9d9d9" />
<path d="M1170.5,1047 L1167,1050.5 L1170.5,1054 Z" fill="#555"/><path d="M1895,1047 L1898.5,1050.5 L1895,1054 Z" fill="#555"/>
<line x1="1174.5" y1="1044" x2="1174.5" y2="1057.5" stroke="#888" stroke-width="1" />
<line x1="1889.5" y1="1044" x2="1889.5" y2="1057.5" stroke="#bbb" stroke-width="1" />
<rect x="1903.5" y="180.5" width="16.5" height="861" fill="#e6e6e6" />
<rect x="1904.5" y="182.5" width="14" height="13.5" fill="#ffffff" stroke="#cfcfcf" stroke-width="0.8" />
<rect x="1904.5" y="196.5" width="14" height="802.5" fill="#ffffff" stroke="#c4c4c4" stroke-width="1" />
<rect x="1904.5" y="999.5" width="14" height="28.5" fill="#d8d8d8" />
<rect x="1904.5" y="1028.5" width="14" height="13" fill="#ffffff" stroke="#cfcfcf" stroke-width="0.8" />
<path d="M1908,191.5 L1911.5,188 L1915,191.5 Z" fill="#555"/><path d="M1908,1033 L1911.5,1036.5 L1915,1033 Z" fill="#555"/>
<text x="7" y="1074" font-size="11" fill="#666" text-anchor="start" font-weight="normal" font-style="normal" textLength="26" lengthAdjust="spacingAndGlyphs" >Ready</text>
<rect x="1563.5" y="1065" width="10" height="7.5" fill="none" stroke="#666" stroke-width="0.9"/><circle cx="1570.5" cy="1073" r="2.8" fill="#f3f2f1" stroke="#666" stroke-width="0.9"/>
<text x="1576.5" y="1074.5" font-size="11" fill="#555" text-anchor="start" font-weight="normal" font-style="normal" textLength="66.5" lengthAdjust="spacingAndGlyphs" >Display Settings</text>
<rect x="1659.5" y="1061" width="33" height="18" fill="#d9d8d7" />
<rect x="1670.5" y="1064.5" width="11.5" height="10.5" fill="#f4f4f4" stroke="#444" stroke-width="1"/>
<line x1="1674.3333333333333" y1="1064.5" x2="1674.3333333333333" y2="1075.0" stroke="#444" stroke-width="0.8" />
<line x1="1678.1666666666667" y1="1064.5" x2="1678.1666666666667" y2="1075.0" stroke="#444" stroke-width="0.8" />
<line x1="1670.5" y1="1068.0" x2="1682.0" y2="1068.0" stroke="#444" stroke-width="0.8" />
<line x1="1670.5" y1="1071.5" x2="1682.0" y2="1071.5" stroke="#444" stroke-width="0.8" />
<rect x="1705.5" y="1064.5" width="12" height="11" fill="none" stroke="#666" stroke-width="1"/><rect x="1708" y="1067" width="7" height="6" fill="none" stroke="#666" stroke-width="0.9"/>
<rect x="1740" y="1064.5" width="12" height="11" fill="none" stroke="#666" stroke-width="1"/><path d="M1744,1064.5 V1069 H1748 V1064.5" fill="none" stroke="#666" stroke-width="0.9"/>
<line x1="1770" y1="1070.5" x2="1775" y2="1070.5" stroke="#999" stroke-width="1" />
<line x1="1780" y1="1070.5" x2="1868" y2="1070.5" stroke="#aaa" stroke-width="1" />
<line x1="1824" y1="1067" x2="1824" y2="1074" stroke="#aaa" stroke-width="1" />
<rect x="1833" y="1064.5" width="4" height="11" fill="#666" />
<path d="M1871.5,1070.5 H1879.5 M1875.5,1066.5 V1074.5" stroke="#999" stroke-width="1"/>
<text x="1889" y="1074.5" font-size="11" fill="#666" text-anchor="start" font-weight="normal" font-style="normal" textLength="24" lengthAdjust="spacingAndGlyphs" >170%</text>
<path d="M428.3,611 H431.7 V613.3 H434 V616.7 H431.7 V619 H428.3 V616.7 H426 V613.3 H428.3 Z" fill="#fff" stroke="#111" stroke-width="1.1"/></svg></body></html>
